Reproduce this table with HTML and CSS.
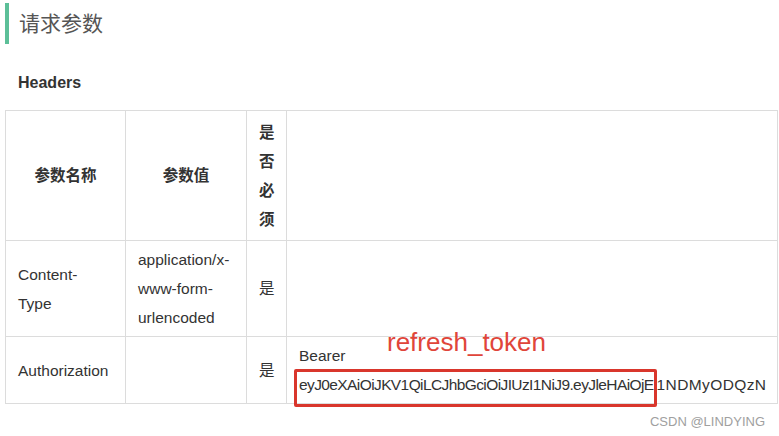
FILE: index.html
```html
<!DOCTYPE html>
<html lang="zh-CN">
<head>
    <meta charset="UTF-8">
    <title>请求参数</title>
    <link rel="stylesheet" href="styles.css">
</head>
<body>
    <div class="doc">
        <h2 class="section-title">请求参数</h2>

        <h4 class="sub-title">Headers</h4>

        <table class="params">
            <colgroup>
                <col class="col-name">
                <col class="col-value">
                <col class="col-req">
                <col>
            </colgroup>
            <tr>
                <th>参数名称</th>
                <th>参数值</th>
                <th>是否必须</th>
                <th></th>
            </tr>
            <tr>
                <td>Content-<br>Type</td>
                <td>application/x-<br>www-form-<br>urlencoded</td>
                <td>是</td>
                <td></td>
            </tr>
            <tr>
                <td>Authorization</td>
                <td></td>
                <td>是</td>
                <td class="token-cell">
                    <div class="token-wrap">
                        Bearer<br>
                        <span class="token">eyJ0eXAiOiJKV1QiLCJhbGciOiJIUzI1NiJ9.eyJleHAiOjE</span><span class="token-rest">1NDMyODQzN</span>
                        <span class="note">refresh_token</span>
                        <span class="mark"></span>
                    </div>
                </td>
            </tr>
        </table>
    </div>

    <div class="watermark">CSDN @LINDYING</div>
</body>
</html>
```

FILE: styles.css
```css
html {
    overflow: hidden;
}
body {
    margin: 0;
    min-height: 436px;
    background: #fff;
    font-family: "Liberation Sans", "Noto Sans CJK SC", sans-serif;
    color: #333;
}
.doc {
    padding: 3px 0 32px 5px;
}
.section-title {
    margin: 0;
    padding-left: 10px;
    border-left: 4px solid #5cbf98;
    font-size: 21px;
    font-weight: normal;
    line-height: 41px;
    color: #555;
}
.sub-title {
    margin: 27px 0 15px 13px;
    font-size: 16px;
    line-height: 24px;
    color: #333;
}
.params {
    width: 773px;
    border-collapse: collapse;
    table-layout: fixed;
    font-size: 15.5px;
    line-height: 29px;
    color: #333;
}
.col-name {
    width: 120px;
}
.col-value {
    width: 121px;
}
.col-req {
    width: 40px;
}
.params th,
.params td {
    border: 1px solid #dcdcdc;
    padding: 4px 12px;
    vertical-align: middle;
}
.params th {
    padding: 6.5px 12px;
    font-weight: bold;
    text-align: center;
}
.params td {
    text-align: left;
}
.token-cell {
    position: relative;
}
.token-wrap {
    position: relative;
    white-space: nowrap;
}
.token {
    letter-spacing: -0.6px;
}
.token-rest {
    padding-left: 3px;
    letter-spacing: 0.4px;
}
.note {
    position: absolute;
    left: 88px;
    top: -12px;
    font-size: 26px;
    line-height: 26px;
    color: #e0453a;
}
.mark {
    position: absolute;
    z-index: 1;
    left: -5px;
    top: 28px;
    width: 357px;
    height: 32px;
    border: 3px solid #d9362c;
    border-radius: 2px;
}
.watermark {
    position: absolute;
    right: 14px;
    top: 414px;
    font-size: 13px;
    color: #a0a0a0;
}
```
